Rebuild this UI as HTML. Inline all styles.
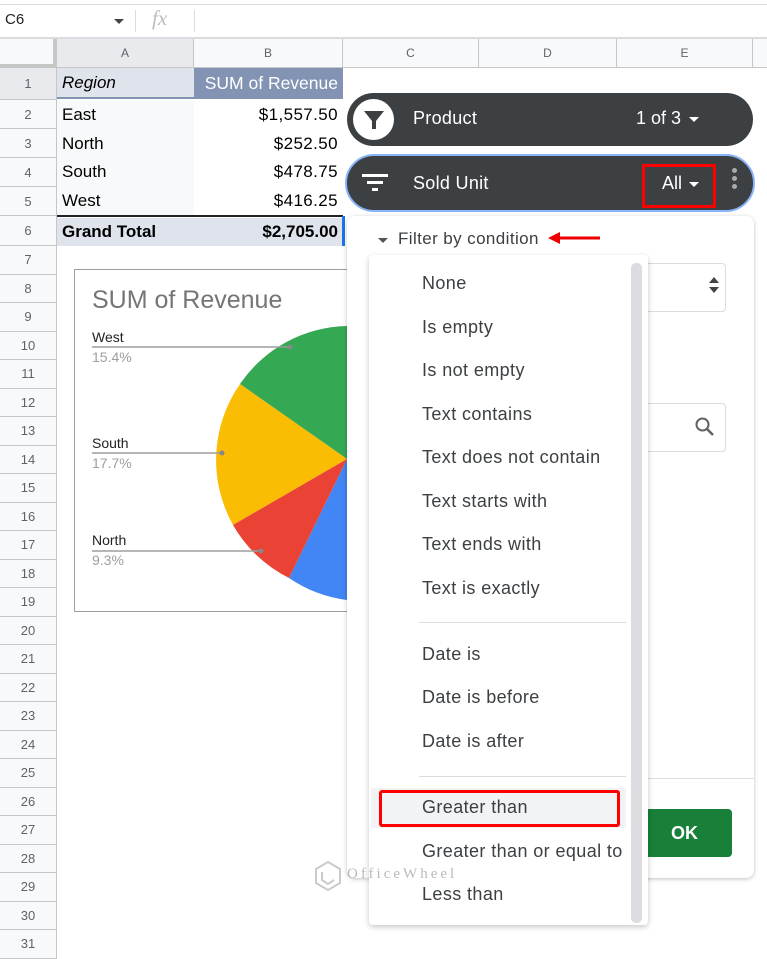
<!DOCTYPE html>
<html><head><meta charset="utf-8"><style>
*{margin:0;padding:0;box-sizing:border-box}
body{width:767px;height:914px;overflow:hidden;background:#fff;font-family:"Liberation Sans",Arial,sans-serif;position:relative}
.a{position:absolute}
.rh{position:absolute;left:0;width:57px;background:#f8f9fa;border-bottom:1px solid #c4c7c5;border-right:1px solid #c4c7c5;color:#5f6368;font-size:13px;text-align:center}
.ch{position:absolute;top:39px;height:29px;background:#f8f9fa;border-right:1px solid #c4c7c5;border-bottom:1px solid #c4c7c5;color:#5f6368;font-size:12px;text-align:center;line-height:28px}
.cell{position:absolute;font-size:17px;color:#000;line-height:28px}
.mi{position:absolute;left:422px;font-size:18px;color:#3c4043;letter-spacing:0.4px;white-space:nowrap}
</style></head><body>
<div class="a" style="left:0;top:4px;width:767px;height:1px;background:#dadce0"></div>
<div class="a" style="left:5px;top:11px;font-size:15px;color:#202124">C6</div>
<div class="a" style="left:114px;top:19px;width:0;height:0;border-left:5px solid transparent;border-right:5px solid transparent;border-top:5px solid #444"></div>
<div class="a" style="left:135px;top:10px;width:1px;height:22px;background:#dadce0"></div>
<div class="a" style="left:152px;top:6px;font-size:21px;color:#bbb;font-family:'Liberation Serif',serif;font-style:italic">fx</div>
<div class="a" style="left:194px;top:10px;width:1px;height:22px;background:#dadce0"></div>
<div class="a" style="left:0;top:37px;width:767px;height:2px;background:#dadce0"></div>
<div class="a" style="left:0;top:39px;width:57px;height:29px;background:#f8f9fa;border-right:4px solid #c4c7c5;border-bottom:4px solid #c4c7c5"></div>
<div class="ch" style="left:57px;width:137px;background:#e8eaed">A</div>
<div class="ch" style="left:194px;width:149px">B</div>
<div class="ch" style="left:343px;width:136px">C</div>
<div class="ch" style="left:479px;width:138px">D</div>
<div class="ch" style="left:617px;width:136px">E</div>
<div class="ch" style="left:753px;width:20px"></div>
<div class="rh" style="top:68px;height:32px;line-height:32px;background:#e8eaed">1</div>
<div class="rh" style="top:100px;height:29px;line-height:29px">2</div>
<div class="rh" style="top:129px;height:29px;line-height:29px">3</div>
<div class="rh" style="top:158px;height:29px;line-height:29px">4</div>
<div class="rh" style="top:187px;height:29px;line-height:29px">5</div>
<div class="rh" style="top:216px;height:30px;line-height:30px">6</div>
<div id="rows"></div>
<script>
var h='';for(var n=7;n<=31;n++){var t=246+(n-7)*28.5;h+='<div class="rh" style="top:'+t+'px;height:28.5px;line-height:27px">'+n+'</div>';}
document.getElementById('rows').innerHTML=h;
</script>
<div class="a" style="left:57px;top:68px;width:137px;height:30px;background:#dfe3ec"></div>
<div class="a" style="left:194px;top:68px;width:149px;height:30px;background:#8293b3"></div>
<div class="a" style="left:57px;top:97px;width:286px;height:2px;background:#8293b3"></div>
<div class="a" style="left:57px;top:100px;width:137px;height:115px;background:#f8f9fa"></div>
<div class="cell" style="left:62px;top:69px;font-style:italic">Region</div>
<div class="cell" style="left:196px;top:69px;color:#fff;width:142px;text-align:right;font-size:17.5px">SUM of Revenue</div>
<div class="cell" style="left:62px;top:101px">East</div><div class="cell" style="left:194px;top:101px;width:144px;text-align:right;letter-spacing:0.4px">$1,557.50</div>
<div class="cell" style="left:62px;top:130px">North</div><div class="cell" style="left:194px;top:130px;width:144px;text-align:right;letter-spacing:0.4px">$252.50</div>
<div class="cell" style="left:62px;top:158px">South</div><div class="cell" style="left:194px;top:158px;width:144px;text-align:right;letter-spacing:0.4px">$478.75</div>
<div class="cell" style="left:62px;top:187px">West</div><div class="cell" style="left:194px;top:187px;width:144px;text-align:right;letter-spacing:0.4px">$416.25</div>
<div class="a" style="left:57px;top:215px;width:286px;height:2px;background:#222"></div>
<div class="a" style="left:57px;top:218px;width:286px;height:28px;background:#dfe3ec"></div>
<div class="cell" style="left:62px;top:218px;font-weight:bold">Grand Total</div>
<div class="cell" style="left:194px;top:218px;width:144px;text-align:right;font-weight:bold">$2,705.00</div>
<div class="a" style="left:342px;top:216px;width:3px;height:30px;background:#1a73e8"></div>
<div class="a" style="left:74px;top:269px;width:280px;height:343px;border:1px solid #9e9e9e;overflow:hidden">
<svg width="280" height="343" style="position:absolute;left:-1px;top:-1px">
<g transform="translate(-74,-269)">
<path d="M347 459 L480 459 L480 600 L347 600 A133 133 0 0 1 289 578 Z" fill="#4285f4"/>
<path d="M347 459 L240 384 A133 133 0 0 1 347 326 L480 326 L480 459 Z" fill="#34a853"/>
<path d="M347 459 L233 525 A133 133 0 0 1 240 384 Z" fill="#fbbc04"/>
<path d="M347 459 L289 578 A133 133 0 0 1 233 525 Z" fill="#ea4335"/>
<line x1="92" y1="347" x2="290" y2="347" stroke="#9e9e9e" stroke-width="1.5"/><circle cx="290" cy="347" r="2.5" fill="#888"/>
<line x1="92" y1="453" x2="222" y2="453" stroke="#9e9e9e" stroke-width="1.5"/><circle cx="222" cy="453" r="2.5" fill="#888"/>
<line x1="92" y1="551" x2="261" y2="551" stroke="#9e9e9e" stroke-width="1.5"/><circle cx="261" cy="551" r="2.5" fill="#888"/>
</g></svg>
<div class="a" style="left:17px;top:16px;font-size:25px;color:#757575">SUM of Revenue</div>
<div class="a" style="left:17px;top:59px;font-size:14px;color:#222">West</div>
<div class="a" style="left:17px;top:79px;font-size:14px;color:#9e9e9e">15.4%</div>
<div class="a" style="left:17px;top:165px;font-size:14px;color:#222">South</div>
<div class="a" style="left:17px;top:185px;font-size:14px;color:#9e9e9e">17.7%</div>
<div class="a" style="left:17px;top:262px;font-size:14px;color:#222">North</div>
<div class="a" style="left:17px;top:282px;font-size:14px;color:#9e9e9e">9.3%</div>
</div>
<div class="a" style="left:347px;top:93px;width:406px;height:53px;border-radius:27px;background:#3c4043"></div>
<div class="a" style="left:353px;top:99px;width:41px;height:41px;border-radius:50%;background:#fff"></div>
<svg class="a" style="left:362px;top:109px" width="24" height="22" viewBox="0 0 24 22"><path d="M2 2 H22 L14 12 V20 H10 V12 Z" fill="#3c4043"/></svg>
<div class="a" style="left:413px;top:108px;font-size:18px;color:#fff;letter-spacing:0.3px">Product</div>
<div class="a" style="left:636px;top:108px;font-size:18px;color:#fff">1 of 3</div>
<div class="a" style="left:689px;top:117px;border-left:5px solid transparent;border-right:5px solid transparent;border-top:5px solid #fff"></div>
<div class="a" style="left:345px;top:154px;width:410px;height:58px;border-radius:29px;background:#3c4043;border:2px solid #8ab4f8"></div>
<svg class="a" style="left:362px;top:172px" width="26" height="20"><rect x="0" y="2" width="26" height="3" fill="#fff"/><rect x="5" y="9" width="16" height="3" fill="#fff"/><rect x="10" y="16" width="6" height="3" fill="#fff"/></svg>
<div class="a" style="left:413px;top:173px;font-size:18px;color:#fff;letter-spacing:0.3px">Sold Unit</div>
<div class="a" style="left:642px;top:164px;width:74px;height:44px;border:3px solid #f00"></div>
<div class="a" style="left:662px;top:173px;font-size:18px;color:#fff">All</div>
<div class="a" style="left:689px;top:182px;border-left:5px solid transparent;border-right:5px solid transparent;border-top:5px solid #fff"></div>
<div class="a" style="left:732px;top:168px;width:5px;height:5px;border-radius:50%;background:#aaa"></div>
<div class="a" style="left:732px;top:176px;width:5px;height:5px;border-radius:50%;background:#aaa"></div>
<div class="a" style="left:732px;top:184px;width:5px;height:5px;border-radius:50%;background:#aaa"></div>
<div class="a" style="left:347px;top:216px;width:407px;height:662px;background:#fff;border-radius:8px;box-shadow:0 1px 4px rgba(0,0,0,.25)"></div>
<div class="a" style="left:378px;top:238px;border-left:5px solid transparent;border-right:5px solid transparent;border-top:5px solid #555"></div>
<div class="a" style="left:398px;top:229px;font-size:17px;color:#3c4043;letter-spacing:0.4px">Filter by condition</div>
<svg class="a" style="left:548px;top:232px" width="54" height="12"><path d="M0 6 L12 0 L12 4.5 L52 4.5 L52 7.5 L12 7.5 L12 12 Z" fill="#e00"/></svg>
<div class="a" style="left:620px;top:263px;width:106px;height:49px;border:1px solid #dadce0;border-radius:4px"></div>
<svg class="a" style="left:708px;top:276px" width="12" height="18"><path d="M1 7 L6 1 L11 7 Z M1 11 L6 17 L11 11 Z" fill="#444"/></svg>
<div class="a" style="left:620px;top:403px;width:106px;height:49px;border:1px solid #dadce0;border-radius:4px"></div>
<svg class="a" style="left:694px;top:416px" width="22" height="22"><circle cx="8.5" cy="8.5" r="6" fill="none" stroke="#5f6368" stroke-width="2"/><line x1="13" y1="13" x2="19" y2="19" stroke="#5f6368" stroke-width="2.5"/></svg>
<div class="a" style="left:648px;top:778px;width:106px;height:1px;background:#dadce0"></div>
<div class="a" style="left:637px;top:809px;width:95px;height:48px;background:#188038;border-radius:4px;color:#fff;font-weight:bold;font-size:18px;text-align:center;line-height:48px">OK</div>
<div class="a" style="left:369px;top:255px;width:279px;height:670px;background:#fff;border-radius:4px;box-shadow:0 2px 6px rgba(0,0,0,.22)"></div>
<div class="a" style="left:631px;top:263px;width:11px;height:660px;background:#dadce0;border-radius:5px"></div>
<div class="mi" style="top:273px">None</div>
<div class="mi" style="top:317px">Is empty</div>
<div class="mi" style="top:360px">Is not empty</div>
<div class="mi" style="top:404px">Text contains</div>
<div class="mi" style="top:447px">Text does not contain</div>
<div class="mi" style="top:491px">Text starts with</div>
<div class="mi" style="top:534px">Text ends with</div>
<div class="mi" style="top:578px">Text is exactly</div>
<div class="a" style="left:419px;top:622px;width:207px;height:1px;background:#dadce0"></div>
<div class="mi" style="top:644px">Date is</div>
<div class="mi" style="top:687px">Date is before</div>
<div class="mi" style="top:731px">Date is after</div>
<div class="a" style="left:419px;top:776px;width:207px;height:1px;background:#dadce0"></div>
<div class="a" style="left:371px;top:788px;width:255px;height:40px;background:#f1f3f4"></div>
<div class="a" style="left:379px;top:790px;width:241px;height:37px;border:3px solid #f00;border-radius:3px"></div>
<div class="mi" style="top:797px">Greater than</div>
<div class="a" style="left:372px;top:836px;width:254px;height:30px;overflow:hidden"><div class="mi" style="left:50px;top:5px">Greater than or equal to</div></div>
<div class="mi" style="top:884px">Less than</div>
<svg class="a" style="left:313px;top:860px;opacity:.5" width="30" height="32"><path d="M15 2 L27 9 V23 L15 30 L3 23 V9 Z" fill="none" stroke="#999" stroke-width="2"/><path d="M9 12 V20 L15 24 L21 20" fill="none" stroke="#999" stroke-width="2"/></svg>
<div class="a" style="left:347px;top:866px;font-size:15px;color:#aaa;font-family:'Liberation Serif',serif;letter-spacing:3px;opacity:.8">OfficeWheel</div>
</body></html>
